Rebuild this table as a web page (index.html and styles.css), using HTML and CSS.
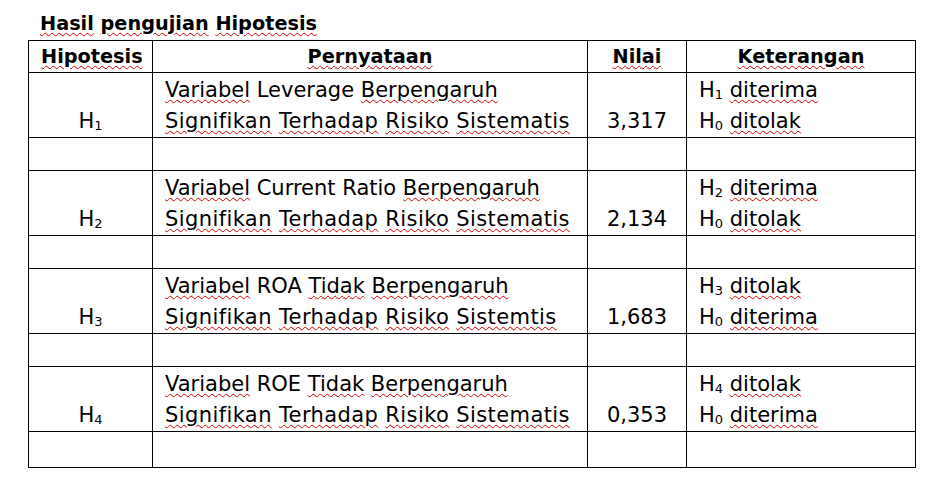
FILE: index.html
```html
<!DOCTYPE html>
<html lang="id">
<head>
<meta charset="utf-8">
<title>Hasil pengujian Hipotesis</title>
<link rel="stylesheet" href="styles.css">
</head>
<body>
<h1 class="title"><span class="sp">Hasil</span> <span class="sp">pengujian</span> <span class="sp">Hipotesis</span></h1>
<table class="hyp">
  <colgroup>
    <col class="c1"><col class="c2"><col class="c3"><col class="c4">
  </colgroup>
  <thead>
    <tr class="head">
      <th><span class="sp">Hipotesis</span></th>
      <th><span class="sp">Pernyataan</span></th>
      <th><span class="sp">Nilai</span></th>
      <th><span class="sp">Keterangan</span></th>
    </tr>
  </thead>
  <tbody>
    <tr class="main">
      <td class="hc"><br>H<sub>1</sub></td>
      <td class="st"><span class="sp">Variabel</span> Leverage <span class="sp">Berpengaruh</span><br><span class="l2"><span class="sp">Signifikan</span> <span class="sp">Terhadap</span> <span class="sp">Risiko</span> <span class="sp">Sistematis</span></span></td>
      <td class="nv"><br>3,317</td>
      <td class="kt">H<sub>1</sub> <span class="sp">diterima</span><br>H<sub>0</sub> <span class="sp">ditolak</span></td>
    </tr>
    <tr class="gap"><td></td><td></td><td></td><td></td></tr>
    <tr class="main">
      <td class="hc"><br>H<sub>2</sub></td>
      <td class="st"><span class="sp">Variabel</span> Current Ratio <span class="sp">Berpengaruh</span><br><span class="l2"><span class="sp">Signifikan</span> <span class="sp">Terhadap</span> <span class="sp">Risiko</span> <span class="sp">Sistematis</span></span></td>
      <td class="nv"><br>2,134</td>
      <td class="kt">H<sub>2</sub> <span class="sp">diterima</span><br>H<sub>0</sub> <span class="sp">ditolak</span></td>
    </tr>
    <tr class="gap"><td></td><td></td><td></td><td></td></tr>
    <tr class="main">
      <td class="hc"><br>H<sub>3</sub></td>
      <td class="st"><span class="sp">Variabel</span> ROA <span class="sp">Tidak</span> <span class="sp">Berpengaruh</span><br><span class="l2"><span class="sp">Signifikan</span> <span class="sp">Terhadap</span> <span class="sp">Risiko</span> <span class="sp">Sistemtis</span></span></td>
      <td class="nv"><br>1,683</td>
      <td class="kt">H<sub>3</sub> <span class="sp">ditolak</span><br>H<sub>0</sub> <span class="sp">diterima</span></td>
    </tr>
    <tr class="gap"><td></td><td></td><td></td><td></td></tr>
    <tr class="main">
      <td class="hc"><br>H<sub>4</sub></td>
      <td class="st"><span class="sp">Variabel</span> ROE <span class="sp">Tidak</span> <span class="sp">Berpengaruh</span><br><span class="l2"><span class="sp">Signifikan</span> <span class="sp">Terhadap</span> <span class="sp">Risiko</span> <span class="sp">Sistematis</span></span></td>
      <td class="nv"><br>0,353</td>
      <td class="kt">H<sub>4</sub> <span class="sp">ditolak</span><br>H<sub>0</sub> <span class="sp">diterima</span></td>
    </tr>
    <tr class="gap last"><td></td><td></td><td></td><td></td></tr>
  </tbody>
</table>
</body>
</html>
```
FILE: styles.css
```css
html, body {
  margin: 0;
  padding: 0;
  background: #fff;
}
body {
  font-family: "DejaVu Sans", "Open Sans", sans-serif;
  font-size: 21px;
  color: #000;
}
.title {
  margin: 0 0 0 40px;
  height: 40px;
  font-size: 19.3px;
  font-weight: bold;
  line-height: 48px;
}
.sp {
  text-decoration: underline wavy #d40000;
  text-decoration-thickness: 1px;
  text-underline-offset: 2px;
}
.l2 {
  letter-spacing: 0.4px;
}
.hyp {
  margin-left: 28px;
  border-collapse: collapse;
  table-layout: fixed;
  width: 887px;
}
.c1 { width: 124px; }
.c2 { width: 435px; }
.c3 { width: 99px; }
.c4 { width: 229px; }
.hyp th, .hyp td {
  border: 1px solid #000;
  padding: 0 12px;
  vertical-align: top;
  white-space: nowrap;
}
.head th {
  height: 30px;
  line-height: 31px;
  font-size: 19.3px;
  font-weight: bold;
  text-align: center;
}
.main td {
  height: 62px;
  padding-top: 2px;
  line-height: 31px;
  box-sizing: border-box;
}
.gap td {
  height: 32px;
}
.gap.last td { height: 35px; }
.hc, .nv { text-align: center; }
.st, .kt { text-align: left; }
sub {
  font-size: 0.62em;
  vertical-align: -0.18em;
  line-height: 0;
}
```
